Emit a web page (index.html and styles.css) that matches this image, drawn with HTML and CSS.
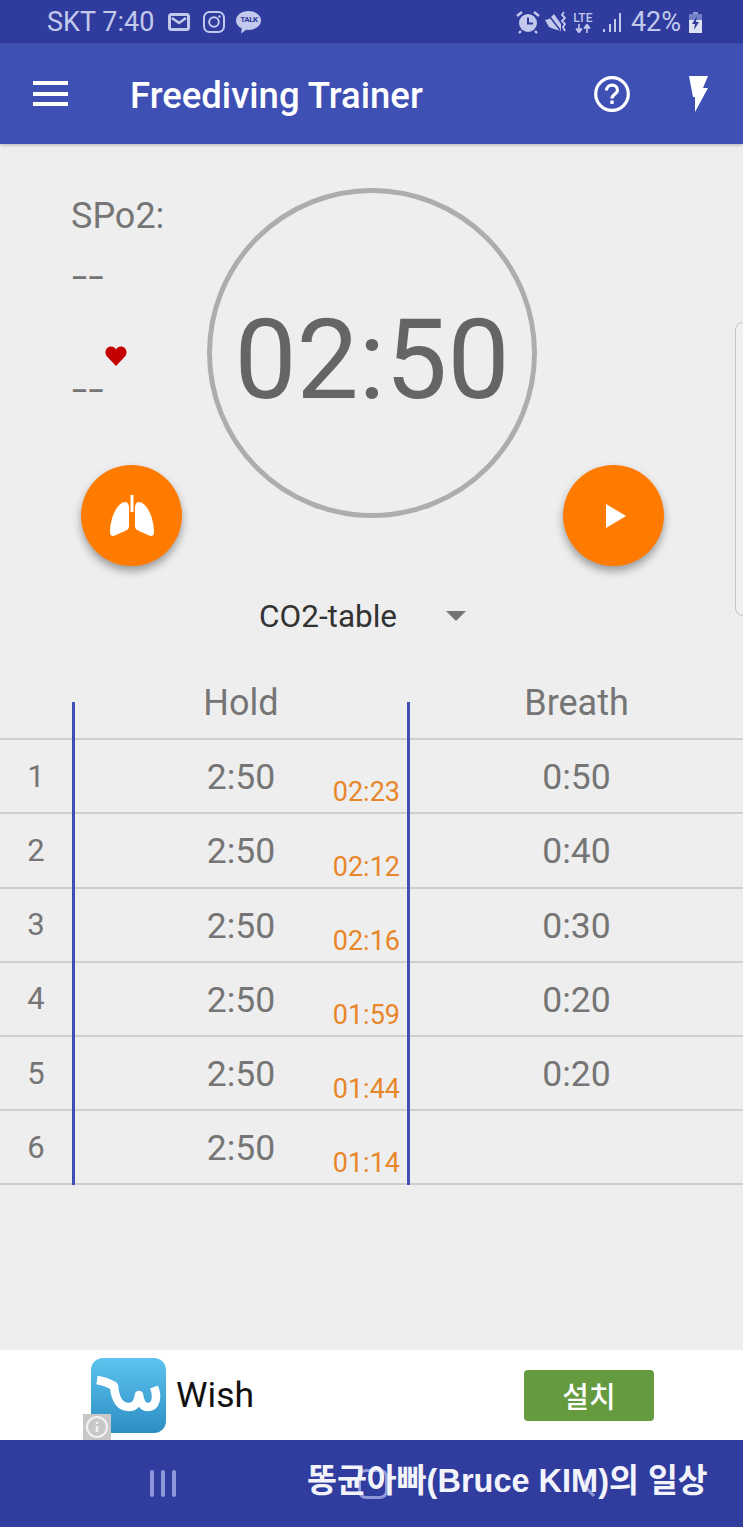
FILE: index.html
```html
<!DOCTYPE html>
<html>
<head>
    <meta charset="utf-8">
    <title>Freediving Trainer</title>
    <link rel="stylesheet" href="styles.css">
</head>
<body>
    <div class="status-bar">
        <span class="status-text">SKT 7:40</span>
        <svg class="st-icon mail" viewBox="0 0 22 18"><rect x="1.5" y="1.5" width="19" height="15" rx="2" fill="none" stroke="#c3c9ec" stroke-width="3"/><path d="M4 5l7 5 7-5" fill="none" stroke="#c3c9ec" stroke-width="2.6"/></svg>
        <svg class="st-icon insta" viewBox="0 0 22 22"><rect x="1" y="1" width="20" height="20" rx="5.5" fill="none" stroke="#c3c9ec" stroke-width="2"/><circle cx="11" cy="11" r="4.8" fill="none" stroke="#c3c9ec" stroke-width="2"/><circle cx="16.5" cy="5.5" r="1.2" fill="#c3c9ec"/></svg>
        <div class="talk">
            <svg viewBox="0 0 25 23"><path d="M12.5 0C5.6 0 0 4.2 0 9.4c0 3.4 2.3 6.3 5.8 8L5 22.5l5.2-3.7c.8.1 1.5.1 2.3.1C19.4 18.900 25 14.600 25 9.400S19.400 0 12.500 0z" fill="#c3c9ec"/></svg>
            <span class="talk-label">TALK</span>
        </div>
        <div class="status-right">
            <svg class="st-icon alarm" viewBox="0 0 24 24"><circle cx="12" cy="13" r="9" fill="#c3c9ec"/><path d="M12 7.500V13.500h5" fill="none" stroke="#2f3c9e" stroke-width="2"/><path d="M1 6l5-4M23 6l-5-4M5 21l-2 2M19 21l2 2" stroke="#c3c9ec" stroke-width="2.400" fill="none"/></svg>
            <svg class="st-icon mute" viewBox="0 0 22 22"><path d="M0 9l4-1 5-5 7 10v7l-7-2-5-2z" fill="#c3c9ec"/><path d="M2 2l13 17" stroke="#2f3c9e" stroke-width="1.500"/><path d="M19 1l-2 3 3 3-3 3 3 3-2 3 2 4" fill="none" stroke="#c3c9ec" stroke-width="1.800"/></svg>
            <div class="lte">
                <span class="lte-label">LTE</span>
                <svg viewBox="0 0 18 9"><path d="M5 0v5M2 4.500l3 4 3-4M13 9V4M10 4.500l3-4 3 4" fill="#c3c9ec" stroke="#c3c9ec" stroke-width="1.600"/></svg>
            </div>
            <svg class="st-icon signal" viewBox="0 0 20 21"><path d="M1 17h2v3H1zM7 12h2v8H7zM12 7h2v13h-2zM17 1h2v19h-2z" fill="#c3c9ec"/></svg>
            <span class="status-text pct">42%</span>
            <svg class="st-icon battery" viewBox="0 0 15 21"><path d="M5 0h5v2H5z" fill="#8e97d2"/><path d="M1 2h13v6H1z" fill="#7380c6"/><path d="M1 8h13v13H1z" fill="#dfe2f4"/><path d="M9 4L4 12h3l-1 6 5-8H8z" fill="#2f3c9e"/></svg>
        </div>
    </div>

    <div class="app-bar">
        <div class="hamburger"><span></span><span></span><span></span></div>
        <div class="app-title">Freediving Trainer</div>
        <svg class="help-icon" viewBox="0 0 36 36"><circle cx="18" cy="18" r="16.300" fill="none" stroke="#fff" stroke-width="3.200"/><path d="M12.500 14.500c0-3.200 2.500-5.300 5.500-5.300s5.500 2 5.500 5c0 3.800-5.500 4-5.500 8.300" fill="none" stroke="#fff" stroke-width="3.200"/><rect x="16.300" y="24.500" width="3.400" height="3.400" fill="#fff"/></svg>
        <svg class="bolt-icon" viewBox="0 0 20 36"><path d="M0 0h19l-5 12h5L6 36V21H4z" fill="#fff"/></svg>
    </div>

    <div class="main">
        <div class="top-row">
            <div class="readouts">
                <div class="spo-label">SPo2:</div>
                <div class="dashes">––</div>
                <svg class="heart" viewBox="0 0 22 20"><path d="M11 20L2 10.500C-1 7 .5 1 5.500.5 8 .3 10 1.500 11 3.500 12 1.500 14 .3 16.500.5 21.500 1 23 7 20 10.500z" fill="#c40000"/></svg>
                <div class="dashes">––</div>
            </div>
            <div class="timer"><span>02:50</span></div>
        </div>

        <div class="fab-row">
            <div class="fab">
                <svg class="lungs" viewBox="0 0 44 41"><path d="M20.500 0h3v17h-3z" fill="#fff"/><path d="M15 7c3 0 4 3 4 6v18c0 3-2 4-4 5L5 40.500C2 41.500 0 41 0 37 0 25 6 8 15 7z" fill="#fff"/><path d="M29 7c-3 0-4 3-4 6v18c0 3 2 4 4 5l10 4.500c3 1 5 .5 5-3.500C44 25 38 8 29 7z" fill="#fff"/></svg>
            </div>
            <div class="fab">
                <div class="play"></div>
            </div>
        </div>

        <div class="dropdown">
            <span class="dropdown-text">CO2-table</span>
            <span class="dropdown-arrow"></span>
        </div>

        <div class="table">
            <div class="row head">
                <div class="cell"></div>
                <div class="cell with-line">Hold</div>
                <div class="cell with-line">Breath</div>
            </div>
            <div class="row">
                <div class="cell">1</div>
                <div class="cell ruled">2:50<span class="actual">02:23</span></div>
                <div class="cell ruled">0:50</div>
            </div>
            <div class="row">
                <div class="cell">2</div>
                <div class="cell ruled">2:50<span class="actual">02:12</span></div>
                <div class="cell ruled">0:40</div>
            </div>
            <div class="row">
                <div class="cell">3</div>
                <div class="cell ruled">2:50<span class="actual">02:16</span></div>
                <div class="cell ruled">0:30</div>
            </div>
            <div class="row">
                <div class="cell">4</div>
                <div class="cell ruled">2:50<span class="actual">01:59</span></div>
                <div class="cell ruled">0:20</div>
            </div>
            <div class="row">
                <div class="cell">5</div>
                <div class="cell ruled">2:50<span class="actual">01:44</span></div>
                <div class="cell ruled">0:20</div>
            </div>
            <div class="row">
                <div class="cell">6</div>
                <div class="cell ruled">2:50<span class="actual">01:14</span></div>
                <div class="cell ruled"></div>
            </div>
        </div>

        <div class="edge-handle"></div>
    </div>

    <div class="ad">
        <div class="wish-logo">
            <svg viewBox="0 0 75 75"><path d="M6 22c7 1 12 3 17 6 1 12 5 21 15 21 6 0 9-5 10-12 1 7 3 12 9 12 8 0 10-10 6-20" fill="none" stroke="#fff" stroke-width="8.500" stroke-linejoin="round"/></svg>
        </div>
        <div class="wish-name">Wish</div>
        <div class="install">설치</div>
        <div class="ad-info"><svg viewBox="0 0 24 24"><circle cx="12" cy="12" r="10" fill="none" stroke="#f2f2f2" stroke-width="2"/><path d="M12 7v2M12 11v6" stroke="#f2f2f2" stroke-width="2.500"/></svg></div>
    </div>

    <div class="nav-bar">
        <div class="recents"><span></span><span></span><span></span></div>
        <div class="home-btn"></div>
        <svg class="back-btn" viewBox="0 0 16 28"><path d="M14 2L3 14l11 12" fill="none" stroke="#8e97d8" stroke-width="3"/></svg>
        <div class="watermark">똥균아빠(Bruce KIM)의 일상</div>
    </div>
</body>
</html>
```

FILE: styles.css
```css
body {
    margin: 0;
    width: 743px;
    height: 1527px;
    display: flex;
    flex-direction: column;
    overflow: hidden;
    font-family: Roboto, "Noto Sans CJK KR", sans-serif;
    background-color: #eeeeee;
}

.status-bar {
    height: 43px;
    flex: none;
    box-sizing: border-box;
    display: flex;
    align-items: center;
    padding: 1px 40px 0 47px;
    background-color: #2f3c9e;
}

.status-text {
    font-size: 27px;
    color: #c3c9ec;
}

.st-icon {
    display: block;
    flex: none;
}

.mail {
    width: 22px;
    height: 18px;
    margin-left: 14px;
}

.insta {
    width: 22px;
    height: 22px;
    margin-left: 13px;
}

.talk {
    width: 25px;
    height: 23px;
    margin-left: 11px;
    position: relative;
}

.talk svg {
    display: block;
}

.talk-label {
    position: absolute;
    left: 4px;
    top: 4px;
    font-size: 8px;
    font-weight: 700;
    letter-spacing: -0.5px;
    color: #2f3c9e;
}

.status-right {
    margin-left: auto;
    display: flex;
    align-items: center;
}

.alarm {
    width: 24px;
    height: 24px;
}

.mute {
    width: 22px;
    height: 22px;
    margin-left: 5px;
}

.lte {
    width: 24px;
    margin-left: 4px;
    display: flex;
    flex-direction: column;
    align-items: center;
}

.lte-label {
    font-size: 12px;
    line-height: 12px;
    font-weight: 500;
    color: #c3c9ec;
}

.lte svg {
    width: 18px;
    height: 9px;
}

.signal {
    width: 20px;
    height: 21px;
    margin-left: 7px;
}

.pct {
    margin-left: 9px;
}

.battery {
    width: 15px;
    height: 21px;
    margin-left: 7px;
}

.app-bar {
    height: 101px;
    flex: none;
    display: flex;
    align-items: center;
    padding: 0 34px 0 33px;
    background-color: #3e50b4;
    box-shadow: 0 1px 3px rgba(0, 0, 0, 0.25);
    position: relative;
}

.hamburger {
    width: 35px;
    height: 25px;
    display: flex;
    flex-direction: column;
    justify-content: space-between;
}

.hamburger span {
    height: 4px;
    background-color: #fff;
}

.app-title {
    margin-left: 62px;
    padding-top: 3px;
    font-size: 36.5px;
    font-weight: 500;
    color: #fff;
}

.help-icon {
    width: 36px;
    height: 36px;
    margin-left: auto;
}

.bolt-icon {
    width: 20px;
    height: 36px;
    margin-left: 59px;
}

.main {
    flex: 1;
    position: relative;
}

.top-row {
    display: flex;
    padding: 44px 0 0 71px;
}

.readouts {
    width: 136px;
    flex: none;
    color: #757575;
}

.spo-label {
    font-size: 36px;
    line-height: 57px;
}

.dashes {
    font-size: 26px;
    line-height: 34px;
    font-weight: 700;
    margin-top: 16px;
}

.heart {
    display: block;
    width: 22px;
    height: 20px;
    margin: 51px 0 0 34px;
}

.heart + .dashes {
    margin-top: 8px;
}

.timer {
    width: 330px;
    height: 330px;
    flex: none;
    box-sizing: border-box;
    border: 5px solid #adadad;
    border-radius: 50%;
    padding-top: 13px;
    display: flex;
    align-items: center;
    justify-content: center;
    font-size: 110.5px;
    font-weight: 400;
    color: #656565;
}

.fab-row {
    display: flex;
    justify-content: space-between;
    margin-top: -53px;
    padding: 0 79px 0 81px;
}

.fab {
    width: 101px;
    height: 101px;
    border-radius: 50%;
    background-color: #ff7b00;
    box-shadow: 0 5px 8px rgba(0, 0, 0, 0.35);
    display: flex;
    align-items: center;
    justify-content: center;
}

.lungs {
    width: 44px;
    height: 41px;
}

.play {
    width: 0;
    height: 0;
    margin-left: 4px;
    border-style: solid;
    border-width: 12.5px 0 12.5px 20px;
    border-color: transparent transparent transparent #fff;
}

.dropdown {
    height: 50px;
    margin-top: 25px;
    display: flex;
    align-items: center;
    padding-left: 259px;
}

.dropdown-text {
    font-size: 31.5px;
    color: #333333;
}

.dropdown-arrow {
    width: 0;
    height: 0;
    margin-left: 49px;
    border-style: solid;
    border-width: 10px 10px 0 10px;
    border-color: #757575 transparent transparent transparent;
}

.table {
    margin-top: 25px;
}

.row {
    display: grid;
    grid-template-columns: 72px 335px 1fr;
    height: 74.2px;
    box-sizing: border-box;
    border-bottom: 2px solid #cfcfcf;
}

.cell {
    display: flex;
    align-items: center;
    justify-content: center;
    position: relative;
    font-size: 35.5px;
    color: #757575;
}

.row .cell:first-child {
    font-size: 31px;
}

.ruled {
    border-left: 3px solid #3f51b5;
    margin-bottom: -2px;
}

.head .cell {
    padding-top: 2px;
    font-size: 36px;
}

.with-line::before {
    content: "";
    position: absolute;
    left: 0;
    bottom: -2px;
    width: 3px;
    height: 38px;
    background-color: #3f51b5;
}

.with-line {
    padding-left: 3px;
}

.actual {
    position: absolute;
    right: 7px;
    bottom: 6px;
    font-size: 27px;
    color: #e8862a;
}

.edge-handle {
    position: absolute;
    top: 178px;
    right: -8px;
    width: 14px;
    height: 292px;
    border: 1px solid #c4c4c4;
    border-radius: 8px;
    background-color: #f1f1f1;
}

.ad {
    height: 90px;
    flex: none;
    display: flex;
    align-items: center;
    padding-left: 91px;
    background-color: #fff;
    position: relative;
}

.wish-logo {
    width: 75px;
    height: 75px;
    border-radius: 12px;
    background-image: linear-gradient(to bottom, #5cc4ef, #2d8dc3);
}

.wish-logo svg {
    display: block;
}

.wish-name {
    margin-left: 10px;
    font-size: 35.5px;
    color: #111111;
}

.install {
    width: 130px;
    height: 51px;
    margin-left: 270px;
    display: flex;
    align-items: center;
    justify-content: center;
    border-radius: 4px;
    background-color: #659a3f;
    color: #fff;
    font-size: 29px;
    font-weight: 500;
}

.ad-info {
    position: absolute;
    left: 83px;
    bottom: 0;
    width: 28px;
    height: 26px;
    display: flex;
    align-items: center;
    justify-content: center;
    background-color: #c8c8c8;
}

.ad-info svg {
    width: 24px;
    height: 24px;
}

.nav-bar {
    height: 87px;
    flex: none;
    position: relative;
    display: flex;
    align-items: center;
    padding-left: 150px;
    background-color: #303d9e;
}

.recents {
    width: 26px;
    height: 27px;
    display: flex;
    justify-content: space-between;
}

.recents span {
    width: 4px;
    background-color: #8e97d8;
    border-radius: 2px;
}

.home-btn {
    width: 24px;
    height: 24px;
    margin-left: 182px;
    border: 3px solid #8e97d8;
    border-radius: 8px;
}

.back-btn {
    width: 16px;
    height: 28px;
    margin-left: 192px;
}

.watermark {
    position: absolute;
    left: 307px;
    top: 14px;
    font-family: "Liberation Sans", "Noto Sans CJK KR", sans-serif;
    font-size: 32.5px;
    font-weight: 700;
    color: #f2f3fb;
    white-space: nowrap;
}
```
